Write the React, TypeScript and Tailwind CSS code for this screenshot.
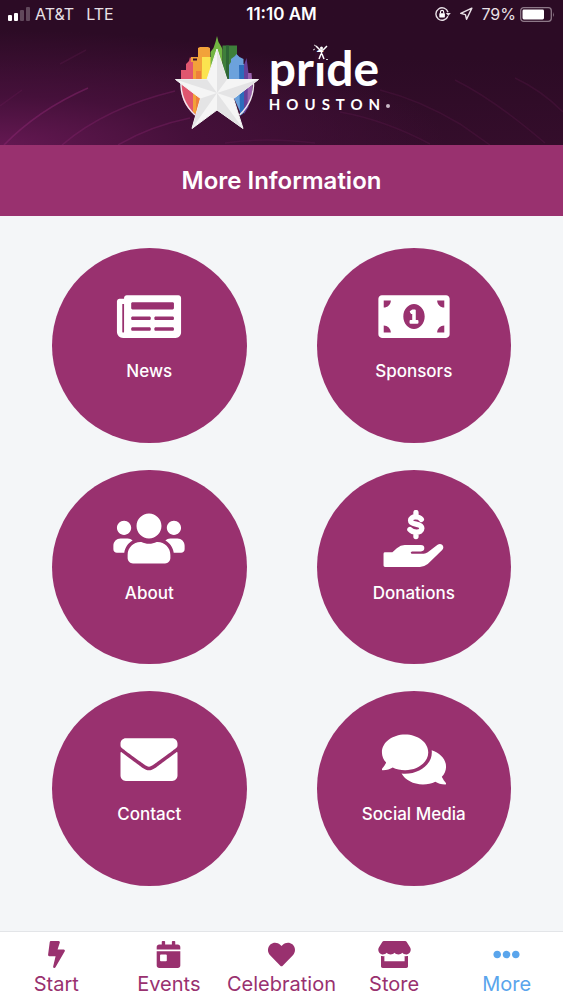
import type { ComponentType } from 'react'
import {
  FaBolt,
  FaCalendarDay,
  FaComments,
  FaEllipsisH,
  FaEnvelope,
  FaHeart,
  FaMoneyBillAlt,
  FaNewspaper,
  FaStore,
  FaUsers,
} from 'react-icons/fa'
import { Navigation } from 'lucide-react'

type Item = {
  label: string
  icon: ComponentType<{ className?: string }>
  active?: boolean
}

function DonationHand({ className }: { className?: string }) {
  return (
    <svg className={className} viewBox="0 0 72 58" fill="currentColor" aria-hidden="true">
      <path
        d="M43.500 9.500c-1.500-2-3.500-2.500-6-2.500-3 0-5 1.300-5 3.600 0 5.200 11.500 2.400 11.500 8 0 2.600-2.500 4-5.500 4-2.700 0-5-.7-6.700-2.700M38 2.500v4M38 23v4"
        fill="none"
        stroke="currentColor"
        strokeWidth="5.400"
        strokeLinecap="round"
        strokeLinejoin="round"
      />
      <path d="M6.500 43H14l4.500-4q4-3.500 8-3.500H43q3.500 0 3.500 3.200t-3.500 3.500H34q-1.300.3-1.300 1.200T34 44.600h12q2 0 4-1.500l10-7.800q2.700-1.600 4.900.4 2 2.500-.2 5L50 55q-4 3-8 3H6.500Q5 58 5 56.500v-12Q5 43 6.500 43z" />
    </svg>
  )
}

const sections: Item[] = [
  { label: 'News', icon: FaNewspaper },
  { label: 'Sponsors', icon: FaMoneyBillAlt },
  { label: 'About', icon: FaUsers },
  { label: 'Donations', icon: DonationHand },
  { label: 'Contact', icon: FaEnvelope },
  { label: 'Social Media', icon: FaComments },
]

const tabs: Item[] = [
  { label: 'Start', icon: FaBolt },
  { label: 'Events', icon: FaCalendarDay },
  { label: 'Celebration', icon: FaHeart },
  { label: 'Store', icon: FaStore },
  { label: 'More', icon: FaEllipsisH, active: true },
]

function StatusBar() {
  return (
    <div className="grid h-7 grid-cols-[1fr_auto_1fr] items-center px-2 text-base text-[#e9e1e7]">
      <div className="flex items-center gap-1">
        <svg width="23" height="14" viewBox="0 0 23 14" fill="#fff" aria-hidden="true">
          <rect x="0" y="8" width="4" height="6" rx="1" />
          <rect x="6" y="6" width="4" height="8" rx="1" />
          <rect x="12" y="3" width="4" height="11" rx="1" opacity=".25" />
          <rect x="18" y="0" width="4" height="14" rx="1" opacity=".25" />
        </svg>
        <span>AT&amp;T</span>
        <span className="ml-2">LTE</span>
      </div>
      <span className="text-[17px] leading-7 font-semibold text-white">11:10 AM</span>
      <div className="flex items-center justify-end gap-2">
        <svg width="16" height="14" viewBox="0 0 16 14" fill="none" aria-hidden="true">
          <path d="M12.9 9.2A6.2 6.2 0 1 1 13 5.2" stroke="#e9e1e7" strokeWidth="1.4" />
          <path d="M10.8 6h5l-2.5 3z" fill="#e9e1e7" />
          <rect x="4.3" y="6.2" width="5.6" height="4.2" rx=".6" fill="#fff" />
          <path d="M5.5 6.4V5a1.6 1.6 0 0 1 3.2 0v1.4" stroke="#fff" strokeWidth="1.1" />
        </svg>
        <Navigation size={14} strokeWidth={2.5} />
        <div className="flex items-center gap-1">
          <span>79%</span>
          <svg width="35" height="15" viewBox="0 0 35 15" aria-hidden="true">
            <rect x=".7" y=".7" width="30.6" height="13.6" rx="3" fill="none" stroke="#8d7888" strokeWidth="1.3" />
            <rect x="2.5" y="2.5" width="21.5" height="10" rx="1.4" fill="#fff" />
            <path d="M33 5q1.6 2.5 0 5z" fill="#8d7888" />
          </svg>
        </div>
      </div>
    </div>
  )
}

function Emblem() {
  return (
    <svg width="88" height="96" viewBox="172 34 88 96" aria-hidden="true">
      {/* Skyline */}
      <path d="M180 86V69h5v-6l3-3 1-4 2 3v-3h7v58h-4q-14-11-14-28z" fill="#e0566f" />
      <path d="M190 61v-5h7v-9l2-1h8l2 1v40l-14 26-3-2V61z" fill="#f2a23a" />
      <path d="M192 57.5h4v2h-4z" fill="#371029" />
      <path d="M195 70h5v28l-5 14z" fill="#ee7f3b" />
      <path d="M201 60v-4h9v30h-9z" fill="#fbe34f" />
      <path d="M209.500 86V51l3-4 2-6 1.500-6 1.500 6 3 5 1 3v37z" fill="#73b543" />
      <path d="M221.500 44.500H236V82h-14.500z" fill="#3e7f3b" />
      <path d="M225 44.500h3V82h-3z" fill="#2e6535" />
      <path d="M228 86V64l2-3v-3l4-3 1.500-2 3 3 4 2v5l2 1v46l-4 4z" fill="#6ca2dc" />
      <path d="M238 64h7l1 5v38l-7 8z" fill="#2c6dbb" />
      <path d="M243 64l2.500-7 1 7 1 8v34l-4.500 7z" fill="#67419a" />
      <path d="M247 72h3.500l1 12q0 12-5 21z" fill="#9a62ad" />
      <path d="M180 80q-1 20 14 34M252.500 80q1 20-14 34" fill="none" stroke="#f0e8f0" strokeWidth="1.4" />
      {/* Star, with the shaded half of each point laid over it */}
      <path
        d="M216 48l10 30.500h31.500L232.500 97.500l9.500 30-26-18.500-25 18.500 8.500-30L174.500 78.500H206z"
        fill="#f5f5f5"
        stroke="#f5f5f5"
        strokeLinejoin="round"
      />
      <g fill="#e4e4e5">
        <path d="M216 48v44l10-13.500z" />
        <path d="M257.500 78.500L216 92l16.500 5.500z" />
        <path d="M242 127.500L216 92v17z" />
        <path d="M191 127.500L216 92l-16.500 5.500z" />
        <path d="M174.500 78.500L216 92l-10-13.500z" />
      </g>
    </svg>
  )
}

function Wordmark() {
  return (
    <div className="relative pt-[9px] font-[Lato,sans-serif] text-white">
      {/* The dancer stands where the dot of the i would be */}
      <svg className="absolute top-[9px] left-[42px]" width="20" height="20" viewBox="0 0 20 20" fill="none" stroke="#fff" aria-hidden="true">
        <path d="M4 8h11v11H4z" fill="#320c2a" stroke="none" />
        <circle cx="10.500" cy="4" r="1.500" fill="#fff" stroke="none" />
        <path d="M5 2l4 4h3l4-4M10.500 6v5M10 10l-2 5M11 10l2 5" strokeWidth="1.500" />
        <path d="M2 6l2-1M3 1l2 1M15 15.500h2" strokeWidth=".8" />
      </svg>
      <p className="text-5xl leading-12 font-bold">pride</p>
      <p className="mt-1 flex items-end text-[15px] leading-4 font-bold tracking-[6px]">
        HOUSTON
        <span className="mb-1 size-1 rounded-full bg-[#c9b9c6]" />
      </p>
    </div>
  )
}

function Header() {
  return (
    <header className="relative overflow-hidden bg-linear-to-b from-[#2c0b25] from-40% to-[#340d2b]">
      <div className="absolute inset-0 bg-[radial-gradient(ellipse_at_bottom_left,#641852_0%,#45103a_24%,transparent_56%)]" />
      <svg
        className="absolute inset-0 size-full"
        viewBox="0 0 563 145"
        preserveAspectRatio="none"
        fill="none"
        stroke="#8a2670"
        strokeWidth="1.500"
        aria-hidden="true"
      >
        <path d="M4 145Q38 110 88 88" opacity=".5" />
        <path d="M62 145Q105 108 175 91" opacity=".35" />
        <path d="M118 145Q150 126 190 118" opacity=".35" />
        <path d="M0 106l22-16M60 64l26-14M225 143q40-6 90 0" opacity=".15" />
        <path d="M380 90q40 10 80 34l30 21M455 80q40 20 90 63M515 78q26 12 48 34M340 112q45 8 90 32" opacity=".15" />
      </svg>
      <div className="relative">
        <StatusBar />
        <div className="flex justify-center gap-2 pt-[7px] pb-[14px]">
          <Emblem />
          <Wordmark />
        </div>
      </div>
    </header>
  )
}

function SectionButton({ label, icon: Icon }: Item) {
  return (
    <button
      type="button"
      className="flex aspect-square flex-col items-center gap-[14px] rounded-full bg-[#99316f] pt-10 text-white"
    >
      <Icon className="h-[57px] w-[72px]" />
      <span className="text-[17px] leading-6 font-medium">{label}</span>
    </button>
  )
}

function TabBar() {
  return (
    <nav className="grid grid-cols-5 border-t border-[#e3e5e8] bg-white pt-[9px] pb-1">
      {tabs.map(({ label, icon: Icon, active }) => (
        <a
          key={label}
          href={`#${label.toLowerCase()}`}
          aria-current={active ? 'page' : undefined}
          className={`flex flex-col items-center gap-1 ${active ? 'text-[#5aa5ec]' : 'text-[#99316f]'}`}
        >
          <Icon className="h-[27px] w-[33px]" />
          <span className="text-xl leading-6">{label}</span>
        </a>
      ))}
    </nav>
  )
}

export default function App() {
  return (
    <div className="flex min-h-screen flex-col bg-[#f4f6f8] font-[Inter,sans-serif]">
      <Header />
      <h1 className="bg-[#99316f] py-5 text-center text-2xl leading-[31px] font-semibold text-white">
        More Information
      </h1>
      <main className="grid flex-1 grid-cols-2 content-start gap-x-[70px] gap-y-[27px] px-[52px] py-8">
        {sections.map((section) => (
          <SectionButton key={section.label} {...section} />
        ))}
      </main>
      <TabBar />
    </div>
  )
}
